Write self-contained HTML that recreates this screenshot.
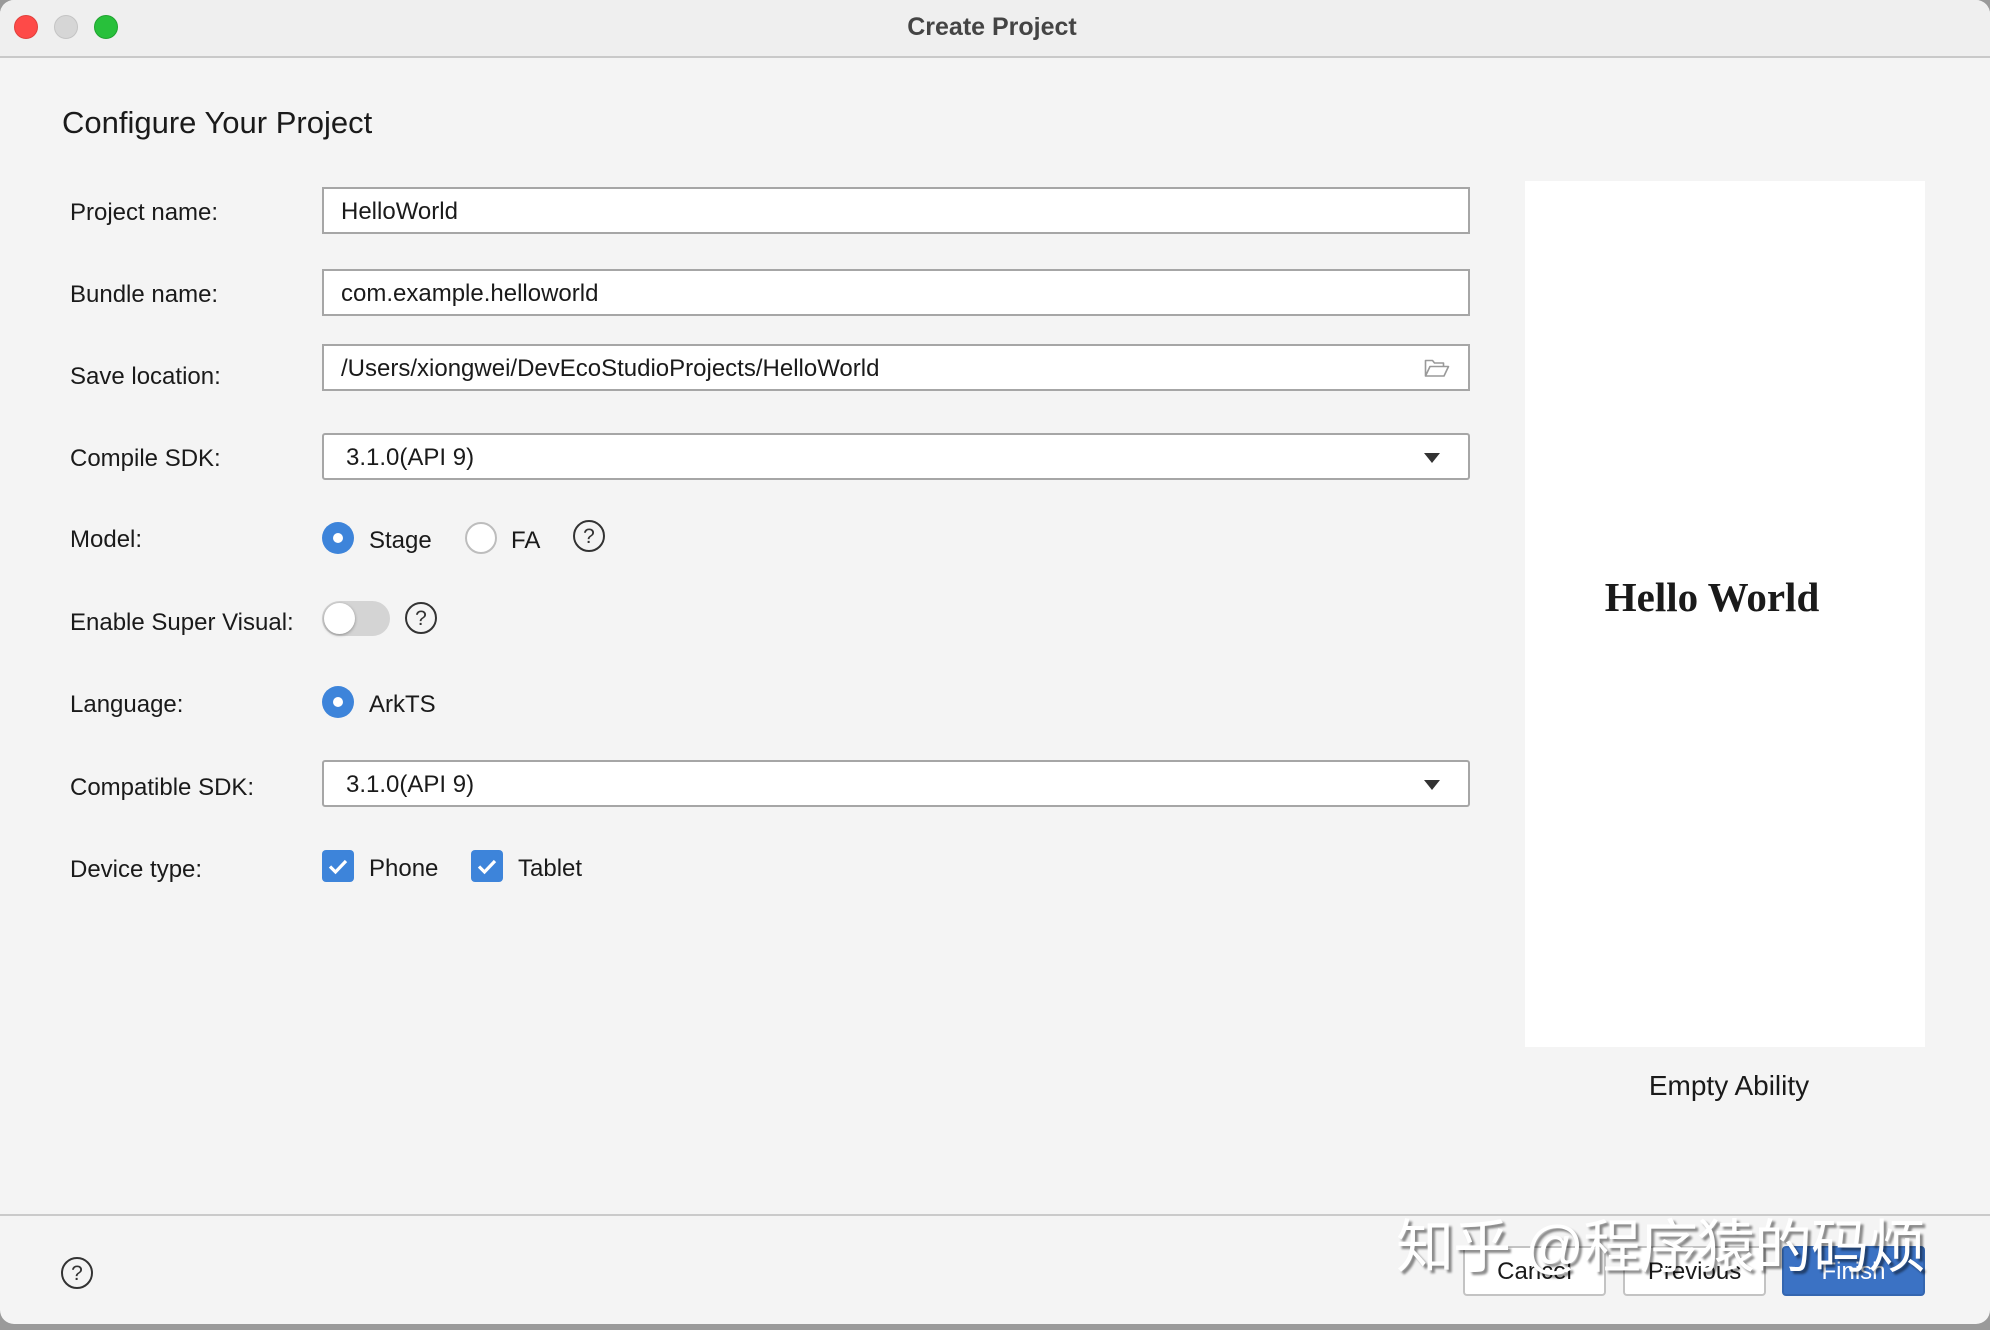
<!DOCTYPE html>
<html><head><meta charset="utf-8"><style>
*{margin:0;padding:0;box-sizing:border-box}
body{width:1990px;height:1330px;background:#9a9a9a;font-family:"Liberation Sans",Arial,sans-serif;color:#1a1a1a;overflow:hidden;position:relative}
.win{position:absolute;left:0;top:0;width:1990px;height:1324px;background:#f4f4f4;border-radius:14px;overflow:hidden}
.title{position:absolute;left:0;top:0;width:1990px;height:58px;background:#efefef;border-bottom:2px solid #c9c9c9}
.dot{position:absolute;top:15px;width:24px;height:24px;border-radius:50%}
.title h1{position:absolute;left:0;width:1984px;text-align:center;top:13px;font-size:25px;font-weight:bold;color:#444}
.abs{position:absolute}
.lbl{position:absolute;left:70px;font-size:24px;line-height:30px}
.inp{position:absolute;left:322px;width:1148px;height:47px;background:#fff;border:2px solid #a6a6a6;font-size:24px;line-height:45px;padding-left:17px}
.dd{padding-left:22px;border-radius:3px}
.arrow{position:absolute;right:28px;top:18px;width:0;height:0;border-left:8px solid transparent;border-right:8px solid transparent;border-top:10px solid #333}
.radio{position:absolute;width:32px;height:32px;border-radius:50%;background:#3d84da}
.radio::after{content:"";position:absolute;left:11px;top:11px;width:10px;height:10px;border-radius:50%;background:#fff}
.radio.off{background:#fff;border:2px solid #bdbdbd}
.radio.off::after{display:none}
.txt{position:absolute;font-size:24px;line-height:30px}
.help{position:absolute;width:32px;height:32px;border:2px solid #333;border-radius:50%;font-size:21px;text-align:center;line-height:29px;color:#333}
.cb{position:absolute;width:32px;height:32px;border-radius:4px;background:#3d84da}
.btn{position:absolute;top:1246px;height:50px;width:143px;border:2px solid #c3c3c3;border-radius:4px;background:#fff;font-size:24px;text-align:center;line-height:48px}
</style></head><body>
<div class="win">
 <div class="title">
  <div class="dot" style="left:14px;background:#fe4a48;border:1px solid #e0403c"></div>
  <div class="dot" style="left:54px;background:#d6d6d6;border:1px solid #c4c4c4"></div>
  <div class="dot" style="left:94px;background:#28c03b;border:1px solid #20a330"></div>
  <h1>Create Project</h1>
 </div>
 <div class="abs" style="left:62px;top:105px;font-size:31px">Configure Your Project</div>

 <div class="lbl" style="top:198px">Project name:</div>
 <div class="inp" style="top:187px">HelloWorld</div>
 <div class="lbl" style="top:280px">Bundle name:</div>
 <div class="inp" style="top:269px">com.example.helloworld</div>
 <div class="lbl" style="top:362px">Save location:</div>
 <div class="inp" style="top:344px">/Users/xiongwei/DevEcoStudioProjects/HelloWorld
  <svg style="position:absolute;right:18px;top:12px" width="26" height="20" viewBox="0 0 26 20"><path d="M1.5 18V2.5h7l2 2.5h9v3.5M1.5 18l4.5-9.5h18.5L20 18z" fill="none" stroke="#999" stroke-width="1.6" stroke-linejoin="round"/></svg>
 </div>
 <div class="lbl" style="top:444px">Compile SDK:</div>
 <div class="inp dd" style="top:433px">3.1.0(API 9)<div class="arrow"></div></div>

 <div class="lbl" style="top:525px">Model:</div>
 <div class="radio" style="left:322px;top:522px"></div>
 <div class="txt" style="left:369px;top:526px">Stage</div>
 <div class="radio off" style="left:465px;top:522px"></div>
 <div class="txt" style="left:511px;top:526px">FA</div>
 <div class="help" style="left:573px;top:520px">?</div>

 <div class="lbl" style="top:608px">Enable Super Visual:</div>
 <div class="abs" style="left:322px;top:601px;width:68px;height:35px;border-radius:18px;background:#d4d4d4"></div>
 <div class="abs" style="left:324px;top:603px;width:31px;height:31px;border-radius:50%;background:#fff;box-shadow:0 1px 3px rgba(0,0,0,.35)"></div>
 <div class="help" style="left:405px;top:602px">?</div>

 <div class="lbl" style="top:690px">Language:</div>
 <div class="radio" style="left:322px;top:686px"></div>
 <div class="txt" style="left:369px;top:690px">ArkTS</div>

 <div class="lbl" style="top:773px">Compatible SDK:</div>
 <div class="inp dd" style="top:760px">3.1.0(API 9)<div class="arrow"></div></div>

 <div class="lbl" style="top:855px">Device type:</div>
 <div class="cb" style="left:322px;top:850px"><svg width="32" height="32"><path d="M8 16.5l5.5 5.5L24 11" fill="none" stroke="#fff" stroke-width="3.2"/></svg></div>
 <div class="txt" style="left:369px;top:854px">Phone</div>
 <div class="cb" style="left:471px;top:850px"><svg width="32" height="32"><path d="M8 16.5l5.5 5.5L24 11" fill="none" stroke="#fff" stroke-width="3.2"/></svg></div>
 <div class="txt" style="left:518px;top:854px">Tablet</div>

 <div class="abs" style="left:1525px;top:181px;width:400px;height:866px;background:#fff"></div>
 <div class="abs" style="left:1525px;top:573px;width:374px;text-align:center;font-family:'Liberation Serif',serif;font-weight:bold;font-size:41px">Hello World</div>
 <div class="abs" style="left:1525px;top:1070px;width:408px;text-align:center;font-size:28px">Empty Ability</div>

 <div class="abs" style="left:0;top:1214px;width:1990px;height:2px;background:#cacaca"></div>
 <div class="help" style="left:61px;top:1257px">?</div>
 <div class="btn" style="left:1463px">Cancel</div>
 <div class="btn" style="left:1623px">Previous</div>
 <div class="btn" style="left:1782px;background:#3b72c4;border-color:#3466b0;color:#fff">Finish</div>
 <div class="abs" style="left:1396px;top:1200px;font-family:'Liberation Sans','Noto Sans CJK SC',sans-serif;font-size:58px;color:#fff;text-shadow:3px 3px 2px rgba(0,0,0,.45);white-space:nowrap;letter-spacing:-1px">知乎 @程序猿的码烦</div>
</div>
</body></html>
